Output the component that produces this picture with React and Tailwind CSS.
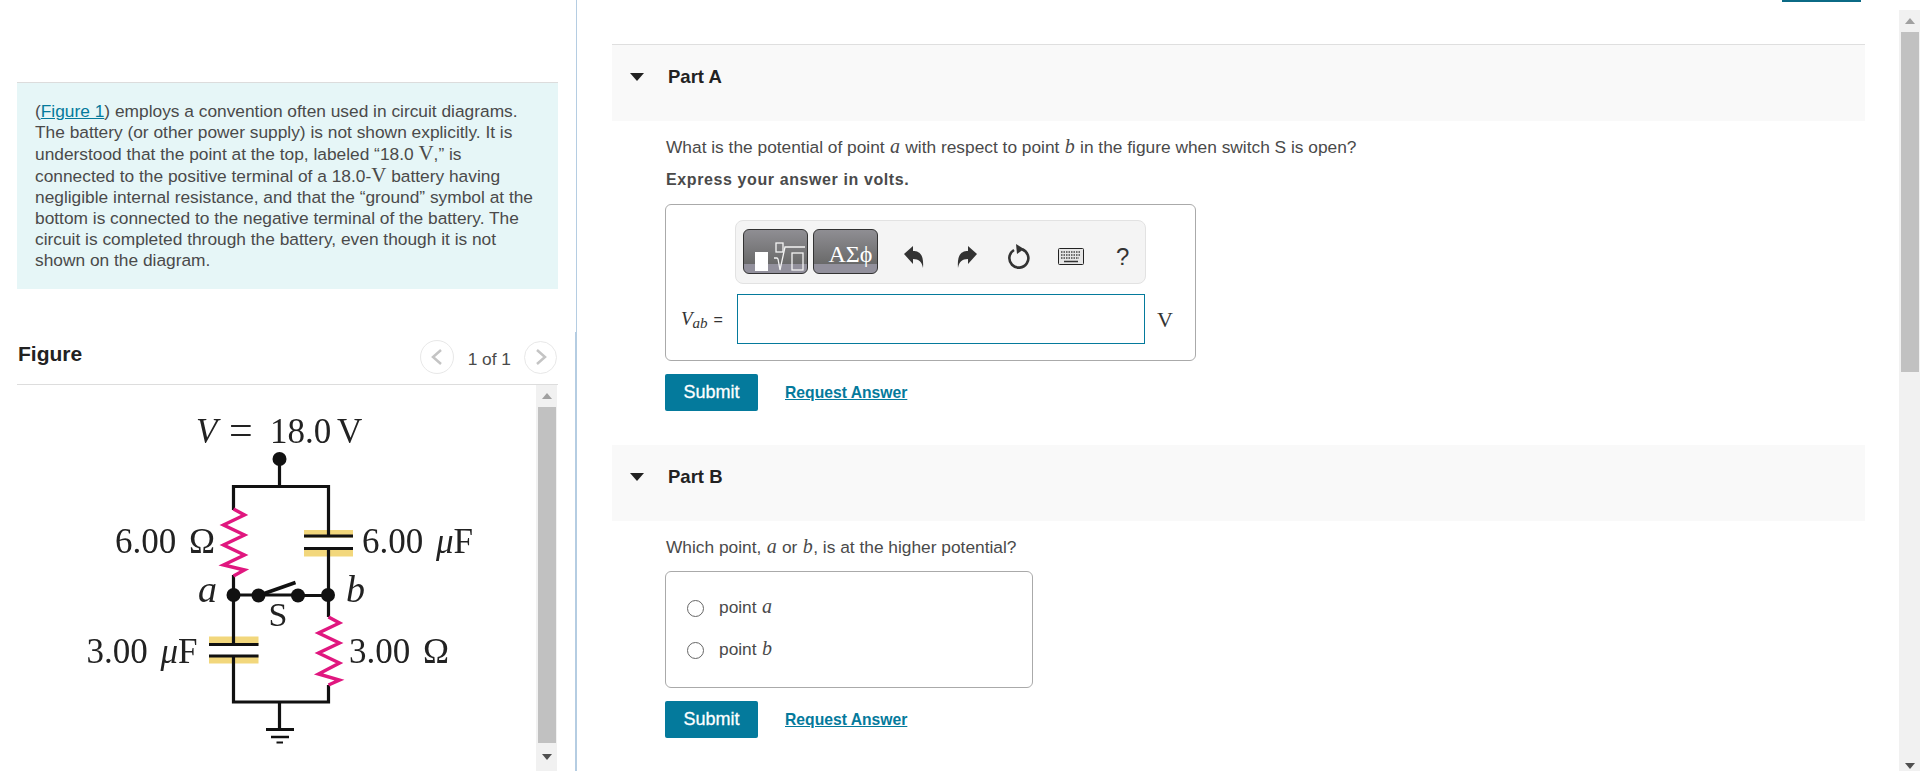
import React from 'react';

const sans = "font-['Liberation_Sans',Arial,sans-serif]";
const mathFont = "font-['Liberation_Serif','Times_New_Roman',serif]";

const M = ({ children, className = '' }) => (
  <span className={`${mathFont} italic text-[20px] leading-none px-[0.5px] ${className}`}>{children}</span>
);

const V = () => <span className={`${mathFont} text-[21px] leading-none`}>V</span>;

const Caret = ({ className = '' }) => (
  <svg width="14" height="8" viewBox="0 0 14 8" className={className}>
    <path d="M0 0h14L7 8z" fill="#222" />
  </svg>
);

const ScrollArrow = ({ up, color }) => (
  <svg width="10" height="6" viewBox="0 0 10 6">
    <path d={up ? 'M5 0l5 6H0z' : 'M0 0h10L5 6z'} fill={color} />
  </svg>
);

const Chevron = ({ right }) => (
  <svg width="12" height="18" viewBox="0 0 12 18" fill="none" stroke="#c4c4c4" strokeWidth="2.5">
    <path d={right ? 'M2 2l8 7-8 7' : 'M10 2L2 9l8 7'} />
  </svg>
);

const Circuit = () => (
  <svg width="420" height="371" viewBox="60 400 420 371" className="shrink-0 blur-[0.35px]">
    <g fill="#f2d77c">
      <rect x="305" y="530" width="49" height="7.5" />
      <rect x="305" y="549" width="49" height="7.5" />
      <rect x="210" y="636.5" width="49.5" height="8" />
      <rect x="210" y="655" width="49.5" height="8.5" />
    </g>
    <g fill="none" stroke="#111" strokeWidth="3.2">
      <path d="M280.5 459v28M234.5 510v-23.5h95V536M329.5 548V596v21M329.5 685v17h-95V656M234.5 644V595V575" />
      <path d="M305 536h49M305 548.5h49M210 644.5h49.5M210 656h49.5" />
      <path d="M234.5 595h65M299 595.5h30" />
      <path d="M259.5 595.5l37-13" strokeWidth="3.5" />
      <path d="M280.5 702v27M267 729.5h28" />
      <path d="M272 737h18" strokeWidth="2.5" />
      <path d="M277.5 742.5h6.5" strokeWidth="2" />
    </g>
    <g fill="none" stroke="#e0177f" strokeWidth="3.4" strokeLinejoin="miter">
      <path d="M234.5 509l11 6-21 10 21 10-21 10 21 10-21 10 21 5-11 6" />
      <path d="M329.5 617l11 6-21 10 21 10-21 10 21 10-21 11 21 6-11 5" />
    </g>
    <g fill="#111">
      <circle cx="280.5" cy="459" r="7" />
      <circle cx="234.5" cy="595" r="7" />
      <circle cx="329" cy="595" r="7" />
      <circle cx="259.5" cy="595.5" r="7" />
      <circle cx="299" cy="595.5" r="7" />
    </g>
    <g fill="#222" fontFamily="'Liberation Serif', serif" fontSize="35" wordSpacing="4">
      <text x="197" y="442.5" fontStyle="italic">V</text>
      <text x="230" y="444" fontSize="42">=</text>
      <text x="271" y="442.5">18.0</text>
      <text x="338" y="442.5">V</text>
      <text x="116" y="552.5">6.00 Ω</text>
      <text x="363" y="552.5">6.00 <tspan fontStyle="italic">μ</tspan>F</text>
      <text x="199" y="602" fontStyle="italic" fontSize="38">a</text>
      <text x="347" y="602" fontStyle="italic" fontSize="38">b</text>
      <text x="269.5" y="626" fontSize="34">S</text>
      <text x="87.5" y="662.5">3.00 <tspan fontStyle="italic">μ</tspan>F</text>
      <text x="350" y="662.5">3.00 Ω</text>
    </g>
  </svg>
);

const ToolbarIcons = () => (
  <div className="flex items-center ml-[25px] mt-[9px]">
    <svg width="22" height="24" viewBox="0 0 22 24" className="mr-[31px]">
      <path d="M1 9l9-8v5c7 0 11 4 10 17-1-6-4-9-10-9v5z" fill="#333" />
    </svg>
    <svg width="22" height="24" viewBox="0 0 22 24" className="mr-[29px]">
      <path d="M21 9l-9-8v5C5 6 1 10 2 23c1-6 4-9 10-9v5z" fill="#333" />
    </svg>
    <svg width="24" height="26" viewBox="0 0 24 26" className="mr-[27px]">
      <path d="M15 5.2A9.5 9.5 0 1 1 7 6" fill="none" stroke="#333" strokeWidth="2.6" />
      <path d="M9 0l8 5-7 5z" fill="#333" />
    </svg>
    <svg width="26" height="17" viewBox="0 0 26 17" className="mr-[32px]">
      <rect x="0.5" y="0.5" width="25" height="16" rx="1" fill="#e6e6e6" stroke="#222" />
      <path d="M3 4h19M3 7h19M3 10h18" stroke="#444" strokeWidth="1.4" strokeDasharray="1.5 1" />
      <path d="M6 13.5h14" stroke="#333" strokeWidth="1.5" />
    </svg>
    <span className="text-[24px] leading-none text-[#333]">?</span>
  </div>
);

const ToolButton = ({ children }) => (
  <div className="w-[65px] h-[45px] mb-[2px] rounded-[6px] border border-[#333] bg-[linear-gradient(to_bottom,#8f8e93_0%,#6a6a6a_78%,#92909c_78%,#92909c_100%)] overflow-hidden flex items-center justify-center">
    {children}
  </div>
);

const Actions = () => (
  <div className="flex items-center mt-[13px] -ml-[1px]">
    <button className="w-[93px] h-[37px] bg-[#047a9c] rounded-[2px] text-white text-[18px] font-normal [-webkit-text-stroke:0.3px_white]">Submit</button>
    <a className="ml-[27px] text-[#047a9c] text-[15.7px] font-bold underline">Request Answer</a>
  </div>
);

const PartHeader = ({ label }) => (
  <div className="w-[1253px] h-[76px] bg-[#f9f9f9] flex items-start pt-[22px]">
    <Caret className="ml-[18px] mt-[6px]" />
    <span className="ml-[24px] text-[18.5px] leading-[20px] font-bold text-[#222]">{label}</span>
  </div>
);

const Radio = ({ children }) => (
  <div className="flex items-center h-[20px]">
    <span className="w-[17px] h-[17px] rounded-full border-[1.5px] border-[#666] bg-white" />
    <span className="ml-[15px] text-[17.33px] text-[#4a4a4a]">{children}</span>
  </div>
);

export default function App() {
  return (
    <div className={`${sans} w-[1920px] h-[771px] bg-white flex overflow-hidden text-[#4a4a4a]`}>
      {/* left column */}
      <div className="w-[575px] shrink-0 pl-[17px] pt-[82px] flex flex-col">
        <div className="w-[541px] h-[207px] bg-[#e6f6f7] border-t border-[#dcdcdc] pl-[18px] pt-[18px] text-[17.33px] leading-[21px] whitespace-nowrap">
          (<a className="text-[#047a9c] underline">Figure 1</a>) employs a convention often used in circuit diagrams.<br />
          The battery (or other power supply) is not shown explicitly. It is<br />
          understood that the point at the top, labeled “18.0 <V />,” is<br />
          connected to the positive terminal of a 18.0-<V /> battery having<br />
          negligible internal resistance, and that the “ground” symbol at the<br />
          bottom is connected to the negative terminal of the battery. The<br />
          circuit is completed through the battery, even though it is not<br />
          shown on the diagram.
        </div>
        <div className="w-[541px] h-[96px] flex items-start justify-between border-b border-[#ddd] pt-[52px]">
          <span className="ml-[1px] text-[21px] leading-[26px] font-bold text-[#222]">Figure</span>
          <div className="flex items-center h-[34px] -mt-[1px]">
            <span className="w-[34px] h-[34px] rounded-full border border-[#e8e8e8] flex items-center justify-center"><Chevron /></span>
            <span className="ml-[14px] mr-[13px] text-[17.33px] relative top-[3px]">1 of 1</span>
            <span className="w-[33px] h-[33px] rounded-full border border-[#e8e8e8] flex items-center justify-center mr-[1px]"><Chevron right /></span>
          </div>
        </div>
        <div className="w-[541px] flex-1 flex items-start overflow-hidden">
          <div className="flex-1 pt-[15px] pl-[42px] overflow-hidden h-full">
            <Circuit />
          </div>
          <div className="w-[21px] h-full bg-[#f1f1f1] flex flex-col items-center mr-[1px]">
            <div className="h-[22px] flex items-center"><ScrollArrow up color="#a0a0a0" /></div>
            <div className="w-[18px] h-[336px] bg-[#c1c1c1]" />
            <div className="flex-1 flex items-center"><ScrollArrow color="#505050" /></div>
          </div>
        </div>
      </div>

      {/* divider: thin above, wider below */}
      <div className="w-[2px] h-full shrink-0 flex flex-col items-end">
        <div className="w-[1px] h-[332px] bg-[#b5cde2]" />
        <div className="w-[2px] flex-1 bg-[#b5cde2]" />
      </div>

      {/* right column */}
      <div className="flex-1 pl-[35px] relative">
        <div className="absolute left-[1205px] top-0 w-[79px] h-[2px] bg-[#0b6a85]" />
        <div className="mt-[44px] border-t border-[#dfdfdf] w-[1253px]" />
        <PartHeader label="Part A" />
        <div className="pl-[54px]">
          <p className="mt-[15px] h-[20px] text-[17.33px] leading-[20px] whitespace-nowrap">
            What is the potential of point <M>a</M> with respect to point <M>b</M> in the figure when switch S is open?
          </p>
          <p className="mt-[14px] text-[16px] leading-[20px] font-bold tracking-[0.6px]">Express your answer in volts.</p>
          <div className="mt-[14px] -ml-[1px] w-[531px] h-[157px] border border-[#aaa] rounded-[6px] pt-[15px]">
            <div className="ml-[69px] w-[411px] h-[64px] bg-[#f4f4f4] border border-[#e2e2e2] rounded-[8px] flex items-center pl-[7px]">
              <ToolButton>
                <svg width="63" height="43" viewBox="1 1 63 43" fill="none" stroke="#f4f4f4" strokeWidth="1.3">
                  <rect x="12" y="23" width="13" height="19" fill="#fff" stroke="none" />
                  <rect x="33" y="14" width="7" height="9" />
                  <path d="M31 29h3l1 1 2 11 5-23h20" />
                  <rect x="49" y="24" width="11" height="17" />
                </svg>
              </ToolButton>
              <div className="w-[5px]" />
              <ToolButton>
                <span className={`${mathFont} text-white text-[24px] leading-none pl-[10px] pt-[6px]`}>ΑΣϕ</span>
              </ToolButton>
              <ToolbarIcons />
            </div>
            <div className="flex items-center mt-[10px]">
              <span className={`${mathFont} ml-[15px] w-[56px] text-[19px] text-[#333] whitespace-nowrap`}>
                <i>V</i><i className="text-[15px] relative top-[3px]">ab</i>
                <span className="ml-[6px] text-[16px] font-['Liberation_Sans']">=</span>
              </span>
              <div className="w-[408px] h-[50px] border border-[#047a9c] bg-white" />
              <span className={`${mathFont} ml-[12px] text-[22px] text-[#333]`}>V</span>
            </div>
          </div>
          <Actions />
        </div>

        <div className="mt-[34px]">
          <PartHeader label="Part B" />
        </div>
        <div className="pl-[54px]">
          <p className="mt-[15px] h-[20px] text-[17.33px] leading-[20px] whitespace-nowrap">
            Which point, <M>a</M> or <M>b</M>, is at the higher potential?
          </p>
          <div className="mt-[15px] -ml-[1px] w-[368px] h-[117px] border border-[#aaa] rounded-[6px] pl-[21px] pt-[26px] flex flex-col gap-[22px]">
            <Radio>point <M>a</M></Radio>
            <Radio>point <M>b</M></Radio>
          </div>
          <Actions />
        </div>
      </div>

      {/* page scrollbar */}
      <div className="w-[21px] h-[761px] shrink-0 flex flex-col items-center bg-[#f1f1f1] mt-[10px]">
        <div className="h-[22px] flex items-center"><ScrollArrow up color="#a0a0a0" /></div>
        <div className="w-[18px] h-[340px] bg-[#c1c1c1]" />
        <div className="flex-1 flex items-end pb-[2px]"><ScrollArrow color="#505050" /></div>
      </div>
    </div>
  );
}
